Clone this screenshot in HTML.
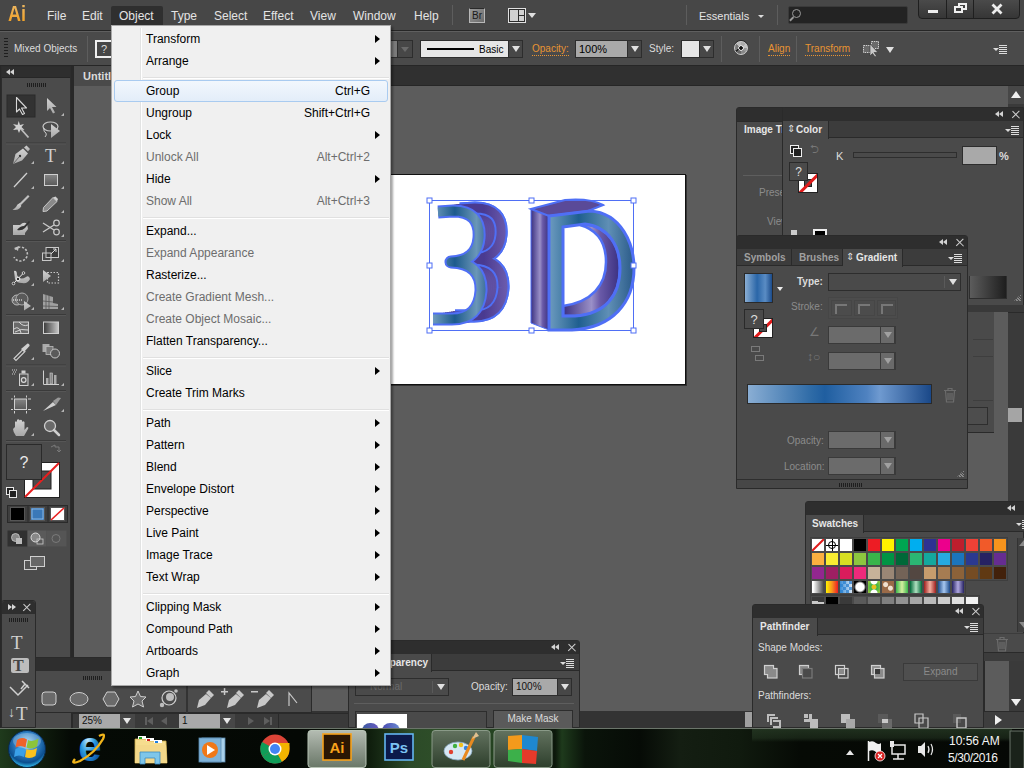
<!DOCTYPE html>
<html><head><meta charset="utf-8">
<style>
*{box-sizing:border-box;margin:0;padding:0}
html,body{width:1024px;height:768px;overflow:hidden;background:#282828;font-family:"Liberation Sans",sans-serif;position:relative}
.a{position:absolute}
.t{position:absolute;white-space:nowrap;line-height:1}
.mi{position:absolute;top:10px;font-size:12px;color:#e4e4e4;line-height:13px;white-space:nowrap}
.lt{position:absolute;font-size:10px;color:#dcdcdc;line-height:12px;white-space:nowrap}
.or{position:absolute;font-size:10px;color:#e89433;line-height:12px;white-space:nowrap;border-bottom:1px dotted #e89433}
.vsep{position:absolute;width:1px;background:#2e2e2e;border-right:1px solid #5d5d5d}
.dd{position:absolute;width:15px;background:#474747;border:1px solid #2d2d2d}
.dd:after{content:"";position:absolute;left:3px;top:50%;margin-top:-3px;border-left:4px solid transparent;border-right:4px solid transparent;border-top:6px solid #e0e0e0}
.ph{position:absolute;height:13px;background:#2e2e2e;border-top:1px solid #474747}
.tabrow{position:absolute;height:17px;background:#3c3c3c;border-bottom:1px solid #2a2a2a}
.tab{position:absolute;top:0;height:17px;font-size:11px;font-weight:bold;color:#9a9a9a;line-height:17px;padding-left:7px;white-space:nowrap;border-right:1px solid #2a2a2a}
.tab.on{background:#4a4a4a;color:#e6e6e6;height:18px}
.pb{position:absolute;background:#4a4a4a}
.pmenu{position:absolute;width:14px;height:9px}
.pmenu:before{content:"";position:absolute;left:0;top:3px;border-left:3px solid transparent;border-right:3px solid transparent;border-top:3px solid #dcdcdc}
.pmenu:after{content:"";position:absolute;left:6px;top:0;width:8px;height:9px;background:repeating-linear-gradient(#dcdcdc 0 1px,transparent 1px 2px)}
.dclose{position:absolute;font-size:11px;color:#dcdcdc;line-height:11px;font-weight:bold}

#menu .sepv{position:absolute;left:28px;top:2px;width:2px;height:656px;background:#e2e3e3;border-right:1px solid #fff}
#menu .it{position:absolute;left:34px;font-size:12px;color:#000;line-height:14px;white-space:nowrap}
#menu .sc{position:absolute;right:20px;font-size:12px;color:#000;line-height:14px;white-space:nowrap}
#menu .dis{color:#6d6d6d}
#menu .ar{position:absolute;left:263px;width:0;height:0;border-top:4px solid transparent;border-bottom:4px solid transparent;border-left:5px solid #000}
#menu .hs{position:absolute;left:31px;width:246px;height:2px;background:#e0e0e0;border-bottom:1px solid #fff}
#menu .hl{position:absolute;left:2px;top:54px;width:274px;height:22px;border:1px solid #a9cbf0;border-radius:3px;background:linear-gradient(#f2f7fd,#e3edf9)}

.dbl{position:absolute;width:8px;height:7px}
.dbl:before,.dbl:after{content:"";position:absolute;top:0;border-top:3.5px solid transparent;border-bottom:3.5px solid transparent;border-right:4px solid #d4d4d4}
.dbl:before{left:0}.dbl:after{left:4px}
.xx{position:absolute;width:8px;height:8px}
.xx:before,.xx:after{content:"";position:absolute;left:-1px;top:3.2px;width:9.5px;height:1.4px;background:#d0d0d0;transform:rotate(45deg)}
.xx:after{transform:rotate(-45deg)}

.ddg{background:#6a6a6a;border-color:#3a3a3a}
.ddg:after{border-top-color:#a0a0a0}
</style></head><body>

<!-- MENUBAR -->
<div class="a" style="left:0;top:0;width:1024px;height:31px;background:#474747;border-bottom:1px solid #262626">
  <div class="t" style="left:8px;top:3px;font-size:22px;font-weight:bold;color:#e8a33a;letter-spacing:0px;transform:scaleX(.82);transform-origin:0 0;background:linear-gradient(#ebb867,#f19d1c);-webkit-background-clip:text;-webkit-text-fill-color:transparent">Ai</div>
  <div class="mi" style="left:47px">File</div>
  <div class="mi" style="left:82px">Edit</div>
  <div class="a" style="left:111px;top:6px;width:52px;height:20px;background:#2f2f2f;border-radius:2px 2px 0 0"></div>
  <div class="mi" style="left:119px">Object</div>
  <div class="mi" style="left:171px">Type</div>
  <div class="mi" style="left:214px">Select</div>
  <div class="mi" style="left:263px">Effect</div>
  <div class="mi" style="left:310px">View</div>
  <div class="mi" style="left:353px">Window</div>
  <div class="mi" style="left:414px">Help</div>
  <div class="vsep" style="left:452px;top:5px;height:20px"></div>
  <div class="a" style="left:469px;top:8px;width:16px;height:15px;background:linear-gradient(135deg,#9a9a9a,#6a6a6a);border:1px solid #b8b8b8;border-top-color:#2a2a2a;font-size:10px;color:#1a1a1a;line-height:13px;text-align:center">Br</div>
  <div class="a" style="left:508px;top:8px;width:18px;height:15px;border:1px solid #e0e0e0;background:#2b2b2b">
    <div class="a" style="left:1px;top:1px;width:8px;height:11px;background:#d0d0d0"></div>
    <div class="a" style="left:10px;top:1px;width:5px;height:5px;background:#d0d0d0"></div>
    <div class="a" style="left:10px;top:7px;width:5px;height:5px;background:#d0d0d0"></div>
  </div>
  <div class="a" style="left:528px;top:13px;border-left:4px solid transparent;border-right:4px solid transparent;border-top:5px solid #e0e0e0"></div>
  <div class="vsep" style="left:686px;top:5px;height:20px"></div>
  <div class="mi" style="left:699px;top:10px;font-size:11px">Essentials</div>
  <div class="a" style="left:758px;top:15px;border-left:3px solid transparent;border-right:3px solid transparent;border-top:3px solid #dcdcdc"></div>
  <div class="vsep" style="left:777px;top:5px;height:20px"></div>
  <div class="a" style="left:788px;top:6px;width:120px;height:18px;background:#232323;border-radius:2px;border:1px solid #3a3a3a"></div>
  <div class="a" style="left:792px;top:9px;width:9px;height:9px;border:1.5px solid #9a9a9a;border-radius:50%"></div>
  <div class="a" style="left:789px;top:18px;width:5px;height:1.5px;background:#9a9a9a;transform:rotate(-45deg)"></div>
  <div class="a" style="left:918px;top:-1px;width:102px;height:20px;background:linear-gradient(#4a4a4a,#363636);border:1px solid #1f1f1f;border-radius:0 0 4px 4px"></div>
  <div class="a" style="left:946px;top:0;width:1px;height:18px;background:#1f1f1f"></div>
  <div class="a" style="left:973px;top:0;width:1px;height:18px;background:#1f1f1f"></div>
  <div class="a" style="left:928px;top:10px;width:10px;height:3px;background:#ececec"></div>
  <div class="a" style="left:958px;top:3px;width:9px;height:7px;border:2px solid #f0f0f0;border-top-width:2px"></div>
  <div class="a" style="left:954px;top:6px;width:9px;height:7px;border:2px solid #f0f0f0;background:#3c3c3c"></div>
  <svg class="a" style="left:990px;top:3px" width="14" height="12" viewBox="0 0 14 12"><path d="M2.5 1.5 L11.5 10.5 M11.5 1.5 L2.5 10.5" stroke="#ececec" stroke-width="2.8"/></svg>
</div>

<!-- CONTROL BAR -->
<div class="a" style="left:0;top:31px;width:1024px;height:35px;background:#4a4a4a;border-top:1px solid #5f5f5f;border-bottom:1px solid #262626">
  <div class="a" style="left:4px;top:6px;width:4px;height:21px;background:repeating-linear-gradient(#1e1e1e 0 1px,transparent 1px 3px)"></div>
  <div class="lt" style="left:14px;top:11px">Mixed Objects</div>
  <div class="vsep" style="left:87px;top:4px;height:26px"></div>
  <div class="a" style="left:95px;top:8px;width:18px;height:18px;border:2px solid #f0f0f0;background:#474747;font-size:11px;color:#ddd;text-align:center;line-height:14px">?</div>
  <div class="a" style="left:380px;top:8px;width:18px;height:18px;background:#7a7a7a;border:1px solid #2d2d2d"></div>
  <div class="a" style="left:397px;top:8px;width:16px;height:18px;background:#474747;border:1px solid #2d2d2d"></div>
  <div class="a" style="left:401px;top:15px;border-left:4px solid transparent;border-right:4px solid transparent;border-top:5px solid #6a6a6a"></div>
  <div class="a" style="left:420px;top:8px;width:89px;height:18px;background:#e6e6e6;border:1px solid #2d2d2d">
    <div class="a" style="left:6px;top:7px;width:47px;height:2px;background:#000"></div>
    <div class="t" style="left:58px;top:4px;font-size:10px;color:#000">Basic</div>
  </div>
  <div class="dd" style="left:508px;top:8px;height:18px"></div>
  <div class="or" style="left:532px;top:11px">Opacity:</div>
  <div class="a" style="left:575px;top:8px;width:53px;height:18px;background:#a9a9a9;border:1px solid #2d2d2d">
    <div class="t" style="left:3px;top:3px;font-size:11px;color:#000">100%</div>
  </div>
  <div class="dd" style="left:627px;top:8px;height:18px"></div>
  <div class="lt" style="left:649px;top:11px">Style:</div>
  <div class="a" style="left:681px;top:8px;width:19px;height:18px;background:#e6e6e6;border:1px solid #2d2d2d"></div>
  <div class="dd" style="left:699px;top:8px;height:18px"></div>
  <div class="vsep" style="left:721px;top:4px;height:26px"></div>
  <div class="a" style="left:734px;top:9px;width:14px;height:14px;border-radius:50%;border:1px solid #d0d0d0;box-shadow:0 -1px 0 #2a2a2a;background:radial-gradient(circle,#111 0 1.5px,#ddd 2px 2.5px,transparent 3px),conic-gradient(#aaa 0 45deg,#c4c4c4 45deg 90deg,#999 90deg 135deg,#888 135deg 180deg,#666 180deg 225deg,#222 225deg 250deg,#777 250deg 315deg,#bbb 315deg)"></div>
  <div class="vsep" style="left:759px;top:4px;height:26px"></div>
  <div class="or" style="left:768px;top:11px">Align</div>
  <div class="vsep" style="left:796px;top:4px;height:26px"></div>
  <div class="or" style="left:805px;top:11px">Transform</div>
  <svg class="a" style="left:862px;top:8px" width="20" height="18" viewBox="0 0 20 18"><rect x="1.5" y="5.5" width="7" height="7" fill="#6a6a6a" stroke="#d0d0d0" stroke-dasharray="1.5 .8"/><rect x="9.5" y="1.5" width="7" height="7" fill="#6a6a6a" stroke="#d0d0d0" stroke-dasharray="1.5 .8"/><path d="M8 4 L8 16 L10.5 13.5 L13 17 L14.5 16 L12 12.5 L16 12.5Z" fill="#c8c8c8" stroke="#333" stroke-width=".6"/></svg>
  <div class="a" style="left:886px;top:15px;border-left:4px solid transparent;border-right:4px solid transparent;border-top:6px solid #e0e0e0"></div>
  <div class="pmenu" style="left:993px;top:13px"></div>
</div>

<!-- DOCUMENT TAB ROW + CANVAS -->
<div class="a" style="left:74px;top:66px;width:950px;height:20px;background:#303030;border-bottom:1px solid #262626"></div>
<div class="a" style="left:74px;top:66px;width:80px;height:20px;background:#4a4a4a;border-right:1px solid #262626">
  <div class="t" style="left:9px;top:5px;font-size:11px;font-weight:bold;color:#dadada">Untitled-1</div>
</div>
<div class="a" style="left:74px;top:86px;width:934px;height:625px;background:#5c5c5c"></div>
<!-- vertical scrollbar -->
<div class="a" style="left:1008px;top:86px;width:16px;height:625px;background:#3a3a3a"></div>
<div class="a" style="left:1008px;top:86px;width:16px;height:18px;background:#474747"></div>
<div class="a" style="left:1011px;top:91px;border-left:5px solid transparent;border-right:5px solid transparent;border-bottom:7px solid #f0f0f0"></div>
<div class="a" style="left:1008px;top:408px;width:14px;height:14px;background:#a5a5a5"></div>
<!-- horizontal scrollbar/status -->
<div class="a" style="left:74px;top:711px;width:950px;height:17px;background:#333"></div>
<div class="a" style="left:745px;top:712px;width:7px;height:15px;background:#a0a0a0"></div>

<!-- ARTBOARD -->
<div class="a" style="left:300px;top:174px;width:386px;height:211px;background:#fff;border:1px solid #111;box-shadow:1px 1px 0 #333"></div>


<!-- 3D ART -->
<svg class="a" style="left:380px;top:170px" width="300" height="170" viewBox="380 170 300 170">
  <defs>
    <linearGradient id="fr" x1="0" y1="0" x2="1" y2="0"><stop offset="0" stop-color="#6d9bbf"/><stop offset=".35" stop-color="#1f5f8f"/><stop offset=".7" stop-color="#5f8fb5"/><stop offset="1" stop-color="#2a5a88"/></linearGradient>
    <linearGradient id="pu" x1="0" y1="0" x2="1" y2="0"><stop offset="0" stop-color="#3a3080"/><stop offset=".5" stop-color="#9a90c8"/><stop offset=".65" stop-color="#6a5aa8"/><stop offset="1" stop-color="#3a3080"/></linearGradient>
    <linearGradient id="fr3" x1="0" y1="0" x2="1" y2="0"><stop offset="0" stop-color="#7aa4c4"/><stop offset=".4" stop-color="#1d5b8c"/><stop offset=".75" stop-color="#6a96b8"/><stop offset="1" stop-color="#24578a"/></linearGradient>
  </defs>
  <!-- 3 back -->
  <linearGradient id="pu3" gradientUnits="userSpaceOnUse" x1="462" y1="0" x2="514" y2="0"><stop offset="0" stop-color="#4a3a90"/><stop offset=".5" stop-color="#7060b0"/><stop offset=".68" stop-color="#b0a8d8"/><stop offset=".8" stop-color="#6a5aa8"/><stop offset="1" stop-color="#3a3080"/></linearGradient>
  <linearGradient id="tl3" gradientUnits="userSpaceOnUse" x1="430" y1="0" x2="492" y2="0"><stop offset="0" stop-color="#7aa4c4"/><stop offset=".4" stop-color="#1d5b8c"/><stop offset=".75" stop-color="#6a96b8"/><stop offset="1" stop-color="#24578a"/></linearGradient>
  
  <path d="M438,212 L453,211 Q481,211 479,238 Q477,261 451,262 Q482,263 481,291 Q479,319 452,319 L433,319" fill="none" stroke-linejoin="round" transform="translate(22 -3)" stroke="#4f6ff5" stroke-width="13"/>
  <path d="M438,212 L453,211 Q481,211 479,238 Q477,261 451,262 Q482,263 481,291 Q479,319 452,319 L433,319" fill="none" stroke-linejoin="round" transform="translate(2 -0.27)" stroke="url(#pu3)" stroke-width="10"/>
  <path d="M438,212 L453,211 Q481,211 479,238 Q477,261 451,262 Q482,263 481,291 Q479,319 452,319 L433,319" fill="none" stroke-linejoin="round" transform="translate(4 -0.55)" stroke="url(#pu3)" stroke-width="10"/>
  <path d="M438,212 L453,211 Q481,211 479,238 Q477,261 451,262 Q482,263 481,291 Q479,319 452,319 L433,319" fill="none" stroke-linejoin="round" transform="translate(6 -0.82)" stroke="url(#pu3)" stroke-width="10"/>
  <path d="M438,212 L453,211 Q481,211 479,238 Q477,261 451,262 Q482,263 481,291 Q479,319 452,319 L433,319" fill="none" stroke-linejoin="round" transform="translate(8 -1.09)" stroke="url(#pu3)" stroke-width="10"/>
  <path d="M438,212 L453,211 Q481,211 479,238 Q477,261 451,262 Q482,263 481,291 Q479,319 452,319 L433,319" fill="none" stroke-linejoin="round" transform="translate(10 -1.36)" stroke="url(#pu3)" stroke-width="10"/>
  <path d="M438,212 L453,211 Q481,211 479,238 Q477,261 451,262 Q482,263 481,291 Q479,319 452,319 L433,319" fill="none" stroke-linejoin="round" transform="translate(12 -1.64)" stroke="url(#pu3)" stroke-width="10"/>
  <path d="M438,212 L453,211 Q481,211 479,238 Q477,261 451,262 Q482,263 481,291 Q479,319 452,319 L433,319" fill="none" stroke-linejoin="round" transform="translate(14 -1.91)" stroke="url(#pu3)" stroke-width="10"/>
  <path d="M438,212 L453,211 Q481,211 479,238 Q477,261 451,262 Q482,263 481,291 Q479,319 452,319 L433,319" fill="none" stroke-linejoin="round" transform="translate(16 -2.18)" stroke="url(#pu3)" stroke-width="10"/>
  <path d="M438,212 L453,211 Q481,211 479,238 Q477,261 451,262 Q482,263 481,291 Q479,319 452,319 L433,319" fill="none" stroke-linejoin="round" transform="translate(18 -2.45)" stroke="url(#pu3)" stroke-width="10"/>
  <path d="M438,212 L453,211 Q481,211 479,238 Q477,261 451,262 Q482,263 481,291 Q479,319 452,319 L433,319" fill="none" stroke-linejoin="round" transform="translate(20 -2.73)" stroke="url(#pu3)" stroke-width="10"/>
  <path d="M438,212 L453,211 Q481,211 479,238 Q477,261 451,262 Q482,263 481,291 Q479,319 452,319 L433,319" fill="none" stroke-linejoin="round" transform="translate(22 -3)" stroke="#4f6ff5" stroke-width="13"/>
  <path d="M438,212 L453,211 Q481,211 479,238 Q477,261 451,262 Q482,263 481,291 Q479,319 452,319 L433,319" fill="none" stroke-linejoin="round" transform="translate(22 -3)" stroke="url(#pu3)" stroke-width="9"/>
  <!-- 3 front -->
  <path d="M438,212 L453,211 Q481,211 479,238 Q477,261 451,262 Q482,263 481,291 Q479,319 452,319 L433,319" fill="none" stroke-linejoin="round" stroke="#4f6ff5" stroke-width="13"/>
  <path d="M438,212 L453,211 Q481,211 479,238 Q477,261 451,262 Q482,263 481,291 Q479,319 452,319 L433,319" fill="none" stroke-linejoin="round" stroke="url(#tl3)" stroke-width="9"/>
  <!-- D extrusion -->
  <path d="M531,209 L549,216 L549,330 L531,323 Z" fill="url(#pu)" stroke="#4f6ff5" stroke-width="1"/>
  <path d="M531,209 L565,200 Q590,198 603,205 L588,211 L549,216 Z" fill="#5a4a98" stroke="#4f6ff5" stroke-width="2"/>
  <!-- D front -->
  <path d="M585,224 C610,227 620,248 620,268 C620,296 605,314 575,316 L563,316 L563,306 C592,302 606,285 606,262 C606,242 598,230 580,225 Z" fill="url(#pu)" stroke="#4f6ff5" stroke-width="2.5"/>
  <path fill-rule="evenodd" d="M549,216 L590,211 C622,213 634,245 634,268 C634,303 612,328 572,330 L549,330 Z M563,227 L585,224 C610,227 620,248 620,268 C620,296 605,314 575,316 L563,316 Z" fill="url(#fr)" stroke="#4f6ff5" stroke-width="3"/>
  <!-- selection box -->
  <rect x="429.5" y="200.5" width="204" height="130" fill="none" stroke="#4f6ff5" stroke-width="1"/>
  <g fill="#fff" stroke="#4f6ff5" stroke-width="1">
    <rect x="427" y="198" width="5" height="5"/><rect x="529" y="198" width="5" height="5"/><rect x="631" y="198" width="5" height="5"/>
    <rect x="427" y="263" width="5" height="5"/><rect x="631" y="263" width="5" height="5"/>
    <rect x="427" y="328" width="5" height="5"/><rect x="529" y="328" width="5" height="5"/><rect x="631" y="328" width="5" height="5"/>
  </g>
</svg>
<!-- TOOLBAR -->
<div class="a" style="left:1px;top:66px;width:70px;height:592px;background:#4b4b4b;border:1px solid #2c2c2c">
  <div class="a" style="left:0;top:0;width:68px;height:11px;background:#2e2e2e;border-bottom:1px solid #262626"></div>
  <div class="dbl" style="left:4px;top:2px"></div>
  <div class="a" style="left:25px;top:16px;width:20px;height:4px;background:repeating-linear-gradient(90deg,#1e1e1e 0 1px,transparent 1px 2px)"></div>
</div>


<!-- IMAGE TRACE PANEL (behind) -->
<div class="a" style="left:736px;top:107px;width:60px;height:201px;background:#4a4a4a;border:1px solid #2a2a2a;border-radius:3px 3px 0 0">
  <div class="a" style="left:0;top:0;width:58px;height:13px;background:#2e2e2e"></div>
  <div class="a" style="left:0;top:13px;width:58px;height:17px;background:#4a4a4a;border-top:1px solid #2a2a2a"></div>
  <div class="t" style="left:7px;top:17px;font-size:10px;font-weight:bold;color:#e6e6e6">Image Trace</div>
  <div class="a" style="left:6px;top:67px;width:46px;height:1px;background:#3c3c3c;border-bottom:1px solid #5e5e5e"></div>
  <div class="t" style="left:22px;top:80px;font-size:10px;color:#8c8c8c">Preset:</div>
  <div class="t" style="left:30px;top:109px;font-size:10px;color:#8c8c8c">View:</div>
</div>

<!-- COLOR PANEL -->
<div class="a" style="left:782px;top:107px;width:242px;height:199px;background:#4a4a4a;border:1px solid #2a2a2a;border-radius:3px 0 0 0">
  <div class="ph" style="left:0;top:0;width:240px;border-top:none"></div>
  <div class="dbl" style="left:212px;top:3px"></div>
  <div class="xx" style="left:229px;top:3px"></div>
  <div class="tabrow" style="left:0;top:13px;width:240px"></div>
  <div class="a" style="left:0;top:13px;width:46px;height:18px;background:#4a4a4a;border-right:1px solid #2a2a2a"></div>
  <div class="t" style="left:4px;top:16px;font-size:10px;color:#dcdcdc">⇕</div>
  <div class="t" style="left:13px;top:17px;font-size:10px;font-weight:bold;color:#e6e6e6">Color</div>
  <div class="pmenu" style="left:222px;top:18px"></div>
  <!-- body -->
  <div class="a" style="left:7px;top:37px;width:9px;height:9px;border:1px solid #eee;background:#222"></div>
  <div class="a" style="left:10px;top:40px;width:9px;height:9px;border:1px solid #eee;background:#222"></div>
  <div class="t" style="left:27px;top:36px;font-size:11px;color:#777">⮌</div>
  <div class="a" style="left:15px;top:65px;width:20px;height:20px;background:#fff;border:1px solid #222;overflow:hidden">
    <div class="a" style="left:5px;top:5px;width:8px;height:8px;background:#4a4a4a;border:1px solid #222"></div>
    <div class="a" style="left:-4px;top:8px;width:28px;height:2.5px;background:#e01b1b;transform:rotate(-45deg)"></div>
  </div>
  <div class="a" style="left:6px;top:54px;width:19px;height:19px;background:#4a4a4a;border:1px solid #2a2a2a;font-size:12px;color:#ddd;text-align:center;line-height:18px">?</div>
  <div class="t" style="left:53px;top:43px;font-size:11px;color:#dcdcdc">K</div>
  <div class="a" style="left:70px;top:44px;width:104px;height:6px;background:#4a4a4a;border:1px solid #2e2e2e"></div>
  <div class="a" style="left:179px;top:38px;width:35px;height:19px;background:#a9a9a9;border:1px solid #2d2d2d"></div>
  <div class="t" style="left:216px;top:43px;font-size:11px;font-weight:bold;color:#dcdcdc">%</div>
  <div class="a" style="left:186px;top:168px;width:38px;height:23px;background:linear-gradient(90deg,#5c5c5c,#1e1e1e);border:1px solid #2e2e2e;border-top:none"></div>
  <div class="a" style="left:231px;top:186px;width:7px;height:7px;background:repeating-linear-gradient(45deg,#888 0 1px,transparent 1px 2px);clip-path:polygon(100% 0,100% 100%,0 100%)"></div>
  <div class="a" style="left:8px;top:122px;width:6px;height:5px;background:#ccc"></div>
  <div class="a" style="left:30px;top:121px;width:14px;height:10px;background:#000;border:2px solid #eee"></div>
</div>

<!-- panel behind gradient on right -->
<div class="a" style="left:900px;top:305px;width:124px;height:8px;background:#393939;border-bottom:1px solid #2a2a2a"></div>
<div class="a" style="left:900px;top:305px;width:95px;height:128px;background:#4a4a4a;border:1px solid #2a2a2a;border-top:none">
  <div class="a" style="left:0;top:0;width:95px;height:7px;background:#393939"></div>
  <div class="a" style="left:72px;top:34px;width:20px;height:1px;background:#3e3e3e"></div>
  <div class="a" style="left:72px;top:51px;width:20px;height:1px;background:#3e3e3e"></div>
  <div class="a" style="left:72px;top:95px;width:20px;height:1px;background:#3e3e3e"></div>
  <div class="a" style="left:60px;top:102px;width:27px;height:18px;border:1px solid #2e2e2e;background:#4d4d4d"></div>
</div>
<div class="a" style="left:994px;top:312px;width:14px;height:188px;background:#5c5c5c"></div>

<!-- GRADIENT PANEL -->
<div class="a" style="left:736px;top:235px;width:232px;height:254px;background:#4a4a4a;border:1px solid #2a2a2a;border-radius:3px 3px 0 0">
  <div class="ph" style="left:0;top:0;width:230px;border-top:none"></div>
  <div class="dbl" style="left:202px;top:3px"></div>
  <div class="xx" style="left:219px;top:3px"></div>
  <div class="tabrow" style="left:0;top:13px;width:230px"></div>
  <div class="a" style="left:0;top:13px;width:55px;height:17px;border-right:1px solid #2a2a2a"></div>
  <div class="t" style="left:7px;top:17px;font-size:10px;font-weight:bold;color:#a0a0a0">Symbols</div>
  <div class="a" style="left:55px;top:13px;width:51px;height:17px;border-right:1px solid #2a2a2a"></div>
  <div class="t" style="left:62px;top:17px;font-size:10px;font-weight:bold;color:#a0a0a0">Brushes</div>
  <div class="a" style="left:106px;top:13px;width:60px;height:18px;background:#4a4a4a;border-right:1px solid #2a2a2a"></div>
  <div class="t" style="left:109px;top:16px;font-size:10px;color:#dcdcdc">⇕</div>
  <div class="t" style="left:119px;top:17px;font-size:10px;font-weight:bold;color:#e6e6e6">Gradient</div>
  <div class="pmenu" style="left:211px;top:18px"></div>
  <!-- body -->
  <div class="a" style="left:7px;top:37px;width:29px;height:30px;border:1px solid #2a2a2a;background:linear-gradient(90deg,#8aaed4,#2a66a8 45%,#5a8cc4 75%,#1b4b8a)"></div>
  <div class="a" style="left:40px;top:51px;border-left:3px solid transparent;border-right:3px solid transparent;border-top:4px solid #eee"></div>
  <div class="t" style="left:60px;top:41px;font-size:10px;font-weight:bold;color:#dcdcdc">Type:</div>
  <div class="a" style="left:91px;top:37px;width:133px;height:18px;background:#4a4a4a;border:1px solid #2d2d2d">
    <div class="a" style="left:115px;top:2px;width:1px;height:12px;background:#333;border-right:1px solid #5a5a5a"></div>
    <div class="a" style="left:120px;top:5px;border-left:4px solid transparent;border-right:4px solid transparent;border-top:6px solid #e0e0e0"></div>
  </div>
  <div class="t" style="left:54px;top:66px;font-size:10px;color:#8c8c8c">Stroke:</div>
  <div class="a" style="left:91px;top:61px;width:70px;height:22px;border:1px solid #464646;background:#4c4c4c"></div>
  <div class="a" style="left:94px;top:64px;width:21px;height:16px;border:1px solid #464646"></div>
  <div class="a" style="left:117px;top:64px;width:21px;height:16px;border:1px solid #464646"></div>
  <div class="a" style="left:140px;top:64px;width:19px;height:16px;border:1px solid #464646"></div>
  <div class="a" style="left:98px;top:68px;width:12px;height:10px;border-left:2px solid #777;border-top:2px solid #777"></div>
  <div class="a" style="left:121px;top:68px;width:12px;height:10px;border-left:2px solid #777;border-top:2px solid #777"></div>
  <div class="a" style="left:144px;top:68px;width:12px;height:10px;border-left:2px solid #777;border-top:2px solid #777"></div>
  <div class="t" style="left:72px;top:90px;font-size:12px;color:#777">∠</div>
  <div class="a" style="left:91px;top:90px;width:68px;height:18px;background:#6b6b6b;border:1px solid #3a3a3a"></div>
  <div class="dd ddg" style="left:143px;top:90px;height:18px"></div>
  <div class="t" style="left:70px;top:115px;font-size:12px;color:#777">↕○</div>
  <div class="a" style="left:91px;top:116px;width:68px;height:18px;background:#6b6b6b;border:1px solid #3a3a3a"></div>
  <div class="dd ddg" style="left:143px;top:116px;height:18px"></div>
  <div class="a" style="left:16px;top:82px;width:20px;height:20px;background:#fff;border:1px solid #222;overflow:hidden"><div class="a" style="left:-4px;top:8px;width:28px;height:2.5px;background:#e01b1b;transform:rotate(-45deg)"></div><div class="a" style="left:5px;top:5px;width:8px;height:8px;background:#4a4a4a;border:1px solid #222"></div></div>
  <div class="a" style="left:7px;top:73px;width:20px;height:20px;background:#4a4a4a;border:1px solid #2a2a2a;font-size:13px;color:#ddd;text-align:center;line-height:19px">?</div>
  <div class="a" style="left:14px;top:110px;width:14px;height:16px;opacity:.5">
    <div class="a" style="left:0;top:0;width:9px;height:6px;border:1px solid #aaa"></div>
    <div class="a" style="left:4px;top:9px;width:9px;height:6px;border:1px solid #aaa"></div>
  </div>
  <div class="a" style="left:10px;top:148px;width:185px;height:20px;border:1px solid #2a2a2a;background:linear-gradient(90deg,#8aaed4 0%,#2d6aa6 35%,#1f5ea0 42%,#4f82c0 65%,#6f9ad0 72%,#1a4888 100%)"></div>
  <svg class="a" style="left:206px;top:151px" width="14" height="16" viewBox="0 0 14 16"><path d="M1 3.5 H13 M5 3.5 V1.5 H9 V3.5 M2.5 4 L3.5 15 H10.5 L11.5 4 M5 6 V13 M7 6 V13 M9 6 V13" fill="none" stroke="#6c6c6c" stroke-width="1.2"/></svg>
  <div class="t" style="left:50px;top:200px;font-size:10px;color:#8c8c8c">Opacity:</div>
  <div class="a" style="left:91px;top:195px;width:68px;height:18px;background:#6b6b6b;border:1px solid #3a3a3a"></div>
  <div class="dd ddg" style="left:143px;top:195px;height:18px"></div>
  <div class="t" style="left:47px;top:226px;font-size:10px;color:#8c8c8c">Location:</div>
  <div class="a" style="left:91px;top:221px;width:68px;height:18px;background:#6b6b6b;border:1px solid #3a3a3a"></div>
  <div class="dd ddg" style="left:143px;top:221px;height:18px"></div>
  <div class="a" style="left:220px;top:234px;width:7px;height:7px;background:repeating-linear-gradient(45deg,#888 0 1px,transparent 1px 2px);clip-path:polygon(100% 0,100% 100%,0 100%)"></div>
  <div class="a" style="left:0;top:243px;width:230px;height:9px;background:#474747;border-top:1px solid #2e2e2e"></div>
  <div class="a" style="left:102px;top:247px;width:24px;height:4px;background:repeating-linear-gradient(90deg,#1e1e1e 0 1px,transparent 1px 2px)"></div>
</div>

<!-- SWATCHES PANEL -->
<div class="a" style="left:805px;top:501px;width:219px;height:227px;background:#4a4a4a;border:1px solid #2a2a2a;border-radius:3px 0 0 0">
  <div class="ph" style="left:0;top:0;width:219px;border-top:none"></div>
  <div class="dbl" style="left:201px;top:3px"></div>
  <div class="tabrow" style="left:0;top:13px;width:219px"></div>
  <div class="a" style="left:0;top:13px;width:58px;height:18px;background:#4a4a4a;border-right:1px solid #2a2a2a"></div>
  <div class="t" style="left:6px;top:17px;font-size:10px;font-weight:bold;color:#e6e6e6">Swatches</div>
  <div class="pmenu" style="left:210px;top:18px"></div>
  <div class="a" style="left:4px;top:35px;width:198px;height:44px;background:#3e3e3e"></div><div class="a" style="left:4px;top:79px;width:156px;height:16px;background:#3e3e3e"></div><div class="a" style="left:4px;top:93px;width:170px;height:16px;background:#3e3e3e"></div>
  <div class="a" style="left:5px;top:36px;width:14px;height:14px;background:#fff;border:1px solid #4a4a4a;overflow:hidden"><div class="a" style="left:-3px;top:5px;width:18px;height:2px;background:#e01b1b;transform:rotate(-45deg)"></div></div>
  <div class="a" style="left:19px;top:36px;width:14px;height:14px;background:#fff;border:1px solid #4a4a4a"><div class="a" style="left:2px;top:2px;width:8px;height:8px;border:1px solid #000;border-radius:50%"></div><div class="a" style="left:6px;top:0;width:1px;height:12px;background:#000"></div><div class="a" style="left:0;top:6px;width:12px;height:1px;background:#000"></div></div>
  <div class="a" style="left:33px;top:36px;width:14px;height:14px;background:#ffffff;border:1px solid #4a4a4a"></div>
  <div class="a" style="left:47px;top:36px;width:14px;height:14px;background:#000000;border:1px solid #4a4a4a"></div>
  <div class="a" style="left:61px;top:36px;width:14px;height:14px;background:#ed1c24;border:1px solid #4a4a4a"></div>
  <div class="a" style="left:75px;top:36px;width:14px;height:14px;background:#fff200;border:1px solid #4a4a4a"></div>
  <div class="a" style="left:89px;top:36px;width:14px;height:14px;background:#00a651;border:1px solid #4a4a4a"></div>
  <div class="a" style="left:103px;top:36px;width:14px;height:14px;background:#00aeef;border:1px solid #4a4a4a"></div>
  <div class="a" style="left:117px;top:36px;width:14px;height:14px;background:#2e3192;border:1px solid #4a4a4a"></div>
  <div class="a" style="left:131px;top:36px;width:14px;height:14px;background:#ec008c;border:1px solid #4a4a4a"></div>
  <div class="a" style="left:145px;top:36px;width:14px;height:14px;background:#be1e2d;border:1px solid #4a4a4a"></div>
  <div class="a" style="left:159px;top:36px;width:14px;height:14px;background:#ef4136;border:1px solid #4a4a4a"></div>
  <div class="a" style="left:173px;top:36px;width:14px;height:14px;background:#f15a29;border:1px solid #4a4a4a"></div>
  <div class="a" style="left:187px;top:36px;width:14px;height:14px;background:#f7941d;border:1px solid #4a4a4a"></div>
  <div class="a" style="left:5px;top:50px;width:14px;height:14px;background:#fbb040;border:1px solid #4a4a4a"></div>
  <div class="a" style="left:19px;top:50px;width:14px;height:14px;background:#f9ed32;border:1px solid #4a4a4a"></div>
  <div class="a" style="left:33px;top:50px;width:14px;height:14px;background:#d7df23;border:1px solid #4a4a4a"></div>
  <div class="a" style="left:47px;top:50px;width:14px;height:14px;background:#8dc63f;border:1px solid #4a4a4a"></div>
  <div class="a" style="left:61px;top:50px;width:14px;height:14px;background:#39b54a;border:1px solid #4a4a4a"></div>
  <div class="a" style="left:75px;top:50px;width:14px;height:14px;background:#009444;border:1px solid #4a4a4a"></div>
  <div class="a" style="left:89px;top:50px;width:14px;height:14px;background:#006838;border:1px solid #4a4a4a"></div>
  <div class="a" style="left:103px;top:50px;width:14px;height:14px;background:#2bb673;border:1px solid #4a4a4a"></div>
  <div class="a" style="left:117px;top:50px;width:14px;height:14px;background:#14a89e;border:1px solid #4a4a4a"></div>
  <div class="a" style="left:131px;top:50px;width:14px;height:14px;background:#27aae1;border:1px solid #4a4a4a"></div>
  <div class="a" style="left:145px;top:50px;width:14px;height:14px;background:#1c75bc;border:1px solid #4a4a4a"></div>
  <div class="a" style="left:159px;top:50px;width:14px;height:14px;background:#2b3990;border:1px solid #4a4a4a"></div>
  <div class="a" style="left:173px;top:50px;width:14px;height:14px;background:#262262;border:1px solid #4a4a4a"></div>
  <div class="a" style="left:187px;top:50px;width:14px;height:14px;background:#662d91;border:1px solid #4a4a4a"></div>
  <div class="a" style="left:5px;top:64px;width:14px;height:14px;background:#92278f;border:1px solid #4a4a4a"></div>
  <div class="a" style="left:19px;top:64px;width:14px;height:14px;background:#9e1f63;border:1px solid #4a4a4a"></div>
  <div class="a" style="left:33px;top:64px;width:14px;height:14px;background:#da1c5c;border:1px solid #4a4a4a"></div>
  <div class="a" style="left:47px;top:64px;width:14px;height:14px;background:#ee2a7b;border:1px solid #4a4a4a"></div>
  <div class="a" style="left:61px;top:64px;width:14px;height:14px;background:#c7b299;border:1px solid #4a4a4a"></div>
  <div class="a" style="left:75px;top:64px;width:14px;height:14px;background:#998675;border:1px solid #4a4a4a"></div>
  <div class="a" style="left:89px;top:64px;width:14px;height:14px;background:#736357;border:1px solid #4a4a4a"></div>
  <div class="a" style="left:103px;top:64px;width:14px;height:14px;background:#534741;border:1px solid #4a4a4a"></div>
  <div class="a" style="left:117px;top:64px;width:14px;height:14px;background:#c69c6d;border:1px solid #4a4a4a"></div>
  <div class="a" style="left:131px;top:64px;width:14px;height:14px;background:#a67c52;border:1px solid #4a4a4a"></div>
  <div class="a" style="left:145px;top:64px;width:14px;height:14px;background:#8c6239;border:1px solid #4a4a4a"></div>
  <div class="a" style="left:159px;top:64px;width:14px;height:14px;background:#754c24;border:1px solid #4a4a4a"></div>
  <div class="a" style="left:173px;top:64px;width:14px;height:14px;background:#603913;border:1px solid #4a4a4a"></div>
  <div class="a" style="left:187px;top:64px;width:14px;height:14px;background:#42210b;border:1px solid #4a4a4a"></div>
  <div class="a" style="left:5px;top:78px;width:14px;height:14px;background:linear-gradient(90deg,#fff 10%,#444);border:1px solid #4a4a4a"></div>
  <div class="a" style="left:19px;top:78px;width:14px;height:14px;background:linear-gradient(90deg,#fff200,#f7941d,#ed1c24);border:1px solid #4a4a4a"></div>
  <div class="a" style="left:33px;top:78px;width:14px;height:14px;background:linear-gradient(90deg,rgba(40,130,210,.9),rgba(40,130,210,0)),repeating-conic-gradient(#5a9ad8 0 25%,#d8e8f8 0 50%) 0 0/6px 6px;border:1px solid #4a4a4a"></div>
  <div class="a" style="left:47px;top:78px;width:14px;height:14px;background:radial-gradient(circle,#fff 0 4px,#000 6px);border:1px solid #4a4a4a"></div>
  <div class="a" style="left:61px;top:78px;width:14px;height:14px;background:radial-gradient(circle at 50% 0,#fff 0 3px,transparent 4px),radial-gradient(circle at 50% 100%,#fff 0 3px,transparent 4px),radial-gradient(circle,#e8c020 0 2px,#39b54a 3px,#8dc63f 7px);border:1px solid #4a4a4a"></div>
  <div class="a" style="left:75px;top:78px;width:14px;height:14px;background:radial-gradient(circle at 30% 30%,#f0e0d0 0 2px,transparent 3px),radial-gradient(circle at 70% 60%,#f0e0d0 0 2px,transparent 3px),#9a6a48;border:1px solid #4a4a4a"></div>
  <div class="a" style="left:89px;top:78px;width:14px;height:14px;background:linear-gradient(90deg,#39b54a,#d7f0a0,#39b54a);border:1px solid #4a4a4a"></div>
  <div class="a" style="left:103px;top:78px;width:14px;height:14px;background:linear-gradient(90deg,#006838,#b0e0c0,#006838);border:1px solid #4a4a4a"></div>
  <div class="a" style="left:117px;top:78px;width:14px;height:14px;background:linear-gradient(90deg,#9e1f1f,#f4b0a0,#9e1f1f);border:1px solid #4a4a4a"></div>
  <div class="a" style="left:131px;top:78px;width:14px;height:14px;background:linear-gradient(90deg,#1c4a8a,#a8c8f0,#1c4a8a);border:1px solid #4a4a4a"></div>
  <div class="a" style="left:145px;top:78px;width:14px;height:14px;background:linear-gradient(90deg,#262262,#b0a8e0,#262262);border:1px solid #4a4a4a"></div>
  <div class="a" style="left:5px;top:94px;width:14px;height:14px;background:linear-gradient(#3a3a3a 0 4px,transparent 4px),linear-gradient(90deg,#c8c8c8 0 6px,#3a3a3a 6px) 0 2px/100% 3px no-repeat,#c8c8c8;border:1px solid #4a4a4a"></div>
  <div class="a" style="left:19px;top:94px;width:14px;height:14px;background:#000000;border:1px solid #4a4a4a"></div>
  <div class="a" style="left:33px;top:94px;width:14px;height:14px;background:#3a3a3a;border:1px solid #4a4a4a"></div>
  <div class="a" style="left:47px;top:94px;width:14px;height:14px;background:#5a5a5a;border:1px solid #4a4a4a"></div>
  <div class="a" style="left:61px;top:94px;width:14px;height:14px;background:#6e6e6e;border:1px solid #4a4a4a"></div>
  <div class="a" style="left:75px;top:94px;width:14px;height:14px;background:#808080;border:1px solid #4a4a4a"></div>
  <div class="a" style="left:89px;top:94px;width:14px;height:14px;background:#939393;border:1px solid #4a4a4a"></div>
  <div class="a" style="left:103px;top:94px;width:14px;height:14px;background:#a6a6a6;border:1px solid #4a4a4a"></div>
  <div class="a" style="left:117px;top:94px;width:14px;height:14px;background:#bababa;border:1px solid #4a4a4a"></div>
  <div class="a" style="left:131px;top:94px;width:14px;height:14px;background:#cdcdcd;border:1px solid #4a4a4a"></div>
  <div class="a" style="left:145px;top:94px;width:14px;height:14px;background:#e0e0e0;border:1px solid #4a4a4a"></div>
  <div class="a" style="left:159px;top:94px;width:14px;height:14px;background:#f2f2f2;border:1px solid #4a4a4a"></div>
  <div class="a" style="left:211px;top:36px;width:9px;height:94px;background:#404040;border-left:1px solid #333"></div><div class="a" style="left:213px;top:38px;border-left:5px solid transparent;border-right:5px solid transparent;border-bottom:6px solid #8a8a8a"></div><div class="a" style="left:213px;top:120px;border-left:5px solid transparent;border-right:5px solid transparent;border-top:6px solid #8a8a8a"></div>
  <div class="a" style="left:0;top:131px;width:219px;height:20px;background:#4a4a4a;border-top:1px solid #3c3c3c"></div>
  <svg class="a" style="left:189px;top:134px" width="14" height="16" viewBox="0 0 14 16"><path d="M1 3.5 H13 M5 3.5 V1.5 H9 V3.5 M2.5 4 L3.5 15 H10.5 L11.5 4 M5 6 V13 M7 6 V13 M9 6 V13" fill="none" stroke="#6c6c6c" stroke-width="1.2"/></svg>
  <div class="a" style="left:0;top:150px;width:219px;height:9px;background:#3c3c3c;border-top:1px solid #2a2a2a"></div>
  <div class="a" style="left:178px;top:159px;width:25px;height:51px;background:#5c5c5c;border-left:1px solid #2a2a2a"></div>
  <div class="a" style="left:203px;top:159px;width:16px;height:51px;background:#3a3a3a"></div>
  <div class="a" style="left:205px;top:197px;border-left:5px solid transparent;border-right:5px solid transparent;border-top:7px solid #f0f0f0"></div>
  <div class="a" style="left:178px;top:209px;width:41px;height:18px;background:#3e3e3e;border-top:1px solid #2a2a2a"></div>
  <div class="a" style="left:189px;top:213px;border-top:5px solid transparent;border-bottom:5px solid transparent;border-left:7px solid #f0f0f0"></div>
</div>

<!-- PATHFINDER PANEL -->
<div class="a" style="left:752px;top:604px;width:232px;height:124px;background:#4a4a4a;border:1px solid #2a2a2a;border-radius:3px 3px 0 0">
  <div class="ph" style="left:0;top:0;width:230px;border-top:none"></div>
  <div class="dbl" style="left:202px;top:3px"></div>
  <div class="xx" style="left:219px;top:3px"></div>
  <div class="tabrow" style="left:0;top:13px;width:230px"></div>
  <div class="a" style="left:0;top:13px;width:65px;height:18px;background:#4a4a4a;border-right:1px solid #2a2a2a"></div>
  <div class="t" style="left:7px;top:17px;font-size:10px;font-weight:bold;color:#e6e6e6">Pathfinder</div>
  <div class="pmenu" style="left:211px;top:18px"></div>
  <div class="t" style="left:5px;top:38px;font-size:10px;color:#dcdcdc">Shape Modes:</div>
  <svg class="a" style="left:-753px;top:-605px" width="985" height="735" viewBox="0 0 985 735">
   <g stroke-width="1.2">
    <rect x="764.5" y="665.5" width="9" height="9" fill="#8a8a8a" stroke="#d0d0d0"/><rect x="767.5" y="668.5" width="9.5" height="9.5" fill="#8a8a8a" stroke="#d0d0d0"/>
    <rect x="766" y="667" width="7" height="7" fill="#8a8a8a"/>
    <rect x="799.5" y="665.5" width="9" height="9" fill="#8a8a8a" stroke="#d0d0d0"/><rect x="802.5" y="668.5" width="9.5" height="9.5" fill="#4a4a4a" stroke="#7a7a7a"/>
    <rect x="835.5" y="665.5" width="9" height="9" fill="none" stroke="#d0d0d0"/><rect x="838.5" y="668.5" width="9.5" height="9.5" fill="none" stroke="#d0d0d0"/>
    <rect x="839" y="669" width="5" height="5" fill="#8a8a8a"/>
    <rect x="871.5" y="665.5" width="9" height="9" fill="#8a8a8a" stroke="#d0d0d0"/><rect x="874.5" y="668.5" width="9.5" height="9.5" fill="#8a8a8a" stroke="#d0d0d0"/>
    <rect x="875" y="669" width="5" height="5" fill="#3a3a3a"/>
   </g>
   <g fill="#bdbdbd">
    <path d="M767 714 h8 v2 h-6 v6 h-2z M770 717 h8 v2 h-6 v6 h-2z M773 720 h8 v8 h-8 v-2 h6 v-4 h-6z" />
    <rect x="804" y="714" width="4" height="4"/><path d="M809 714 h3 v8 h-8 v-3 h5z"/><rect x="810" y="719" width="8" height="9"/>
    <rect x="841" y="714" width="9" height="9"/><rect x="846" y="719" width="9" height="9" fill="#a8a8a8"/>
    <rect x="878" y="714" width="10" height="9" fill="#5a5a5a"/><rect x="882" y="719" width="10" height="9" fill="#6a6a6a"/><rect x="882" y="719" width="6" height="4" fill="#c8c8c8"/>
    <path d="M915 714 h8 v9 h-8z M919 718 h9 v10 h-9z" fill="none" stroke="#c8c8c8" stroke-width="1.2"/>
    <path d="M953 714 h8 v9 h-8z" fill="#5a5a5a"/><path d="M957 718 h9 v10 h-9z" fill="none" stroke="#c8c8c8" stroke-width="1.4"/>
   </g>
  </svg>
  <div class="a" style="left:150px;top:58px;width:75px;height:18px;border:1px solid #3a3a3a;background:#4f4f4f;font-size:10px;color:#8a8a8a;text-align:center;line-height:16px">Expand</div>
  <div class="t" style="left:5px;top:86px;font-size:10px;color:#dcdcdc">Pathfinders:</div>
</div>


<!-- TOOLBAR ICONS -->
<svg class="a" style="left:0;top:0" width="72" height="660" viewBox="0 0 72 660">
  <defs>
    <linearGradient id="tg" x1="0" y1="0" x2="0" y2="1"><stop offset="0" stop-color="#d2d2d2"/><stop offset="1" stop-color="#a8a8a8"/></linearGradient>
    <linearGradient id="rg" x1="0" y1="0" x2="0" y2="1"><stop offset="0" stop-color="#858585"/><stop offset="1" stop-color="#5a5a5a"/></linearGradient>
    <linearGradient id="gg" x1="0" y1="0" x2="1" y2="0"><stop offset="0" stop-color="#3a3a3a"/><stop offset="1" stop-color="#c8c8c8"/></linearGradient>
  </defs>
  <rect x="7" y="95" width="28" height="22" fill="#323232" stroke="#2a2a2a"/>
  <g fill="url(#tg)">
    <!-- small triangles -->
    <path d="M61 116 L64 113 L64 116Z"/><path d="M31 164 L34 161 L34 164Z"/><path d="M61 164 L64 161 L64 164Z"/>
    <path d="M31 189 L34 186 L34 189Z"/><path d="M61 189 L64 186 L64 189Z"/><path d="M61 213 L64 210 L64 213Z"/>
    <path d="M61 237 L64 234 L64 237Z"/><path d="M31 262 L34 259 L34 262Z"/><path d="M61 262 L64 259 L64 262Z"/>
    <path d="M31 286 L34 283 L34 286Z"/><path d="M31 310 L34 307 L34 310Z"/><path d="M61 310 L64 307 L64 310Z"/>
    <path d="M31 360 L34 357 L34 360Z"/><path d="M31 386 L34 383 L34 386Z"/><path d="M61 386 L64 383 L64 386Z"/>
    <path d="M61 412 L64 409 L64 412Z"/><path d="M31 436 L34 433 L34 436Z"/>
  </g>
  <!-- selection (outline arrow) -->
  <path d="M16.5 97.5 L16.5 112 L19.5 109 L22.5 114.5 L24.5 113.5 L21.5 108 L26.5 108Z" fill="#2e2e2e" stroke="#d8d8d8" stroke-width="1.1" stroke-linejoin="round"/>
  <!-- direct selection -->
  <path d="M47 98 L47 111 L50 108 L53 113.5 L55 112.5 L52 107 L56.5 107Z" fill="url(#tg)"/>
  <!-- magic wand -->
  <path d="M18.7 121 L20 125 L24 124 L21.5 127 L24.5 130 L20.5 129.5 L19 133 L17.5 129.5 L13 130 L16 127 L13 124 L17.5 125Z" fill="#d0d0d0"/>
  <line x1="21" y1="129" x2="28.5" y2="137.5" stroke="#bdbdbd" stroke-width="1.8"/>
  <!-- lasso -->
  <ellipse cx="50.5" cy="126.5" rx="7.5" ry="4.5" fill="none" stroke="#c8c8c8" stroke-width="1.2"/>
  <path d="M44 128 Q43 132 46 133 Q47 135 45 137" fill="none" stroke="#c8c8c8" stroke-width="1"/>
  <path d="M51 124 L51 138 L60 131Z" fill="url(#tg)"/>
  <line x1="6" y1="143" x2="66" y2="143" stroke="#3a3a3a" stroke-width="1"/><line x1="6" y1="144" x2="66" y2="144" stroke="#565656" stroke-width="1"/>
  <!-- pen -->
  <path d="M13 164 L15.5 154 L23 148.5 L28 153.5 L22 160.5Z" fill="url(#tg)"/>
  <path d="M24 147.5 L26.5 145.5 L30 149 L28 151.5Z" fill="url(#tg)"/>
  <circle cx="20" cy="156" r="1.2" fill="#333"/><line x1="13.5" y1="163.5" x2="19.5" y2="156.5" stroke="#555" stroke-width=".8"/>
  <!-- type T -->
  <text x="50.5" y="162" font-family="Liberation Serif" font-size="18" fill="#d0d0d0" text-anchor="middle">T</text>
  <!-- line -->
  <line x1="14" y1="187" x2="27" y2="173" stroke="#d0d0d0" stroke-width="1.3"/>
  <!-- rect -->
  <rect x="44.5" y="174.5" width="13" height="11" fill="url(#rg)" stroke="#cfcfcf" stroke-width="1"/>
  <!-- brush -->
  <path d="M29.5 196.5 L21 205 L19.5 203.5 L28 195Z" fill="#c0c0c0"/>
  <path d="M20 203 Q17 204 16 207 Q14 209 12.5 209.5 Q17 211 20 208 Q22 206 21 205Z" fill="url(#tg)"/>
  <!-- pencil -->
  <path d="M53 197.5 L57 201.5 L47 211 L43 211.5 L43.5 207.5Z" fill="#8a8a8a" stroke="#c8c8c8" stroke-width="1"/>
  <path d="M53 197.5 L57 201.5 L58 199 L55.5 196.5Z" fill="#d0d0d0"/>
  <!-- shaper/blob -->
  <path d="M13 225 L20 225 Q24 221 27 224 L28 229 L25 233 L25 235 L13 235Z" fill="url(#tg)"/>
  <path d="M17 230 Q20 226 24 226 L29 221 L30 222 L25 228 Q22 231 17 230Z" fill="#333"/>
  <!-- scissors -->
  <circle cx="56.5" cy="223" r="2.8" fill="none" stroke="#c8c8c8" stroke-width="1.2"/>
  <circle cx="56.5" cy="232" r="2.8" fill="none" stroke="#c8c8c8" stroke-width="1.2"/>
  <path d="M43 223 L54 230 M43 232 L54 225" stroke="#c8c8c8" stroke-width="1.4"/>
  <line x1="6" y1="240.5" x2="66" y2="240.5" stroke="#3a3a3a"/><line x1="6" y1="241.5" x2="66" y2="241.5" stroke="#565656"/>
  <!-- rotate -->
  <path d="M15 249.5 A7 7 0 1 1 14 257" fill="none" stroke="#c0c0c0" stroke-width="1.6" stroke-dasharray="2.2 1.6"/>
  <path d="M14 248 L19 246 L18 251Z" fill="#c0c0c0"/>
  <!-- scale -->
  <rect x="46" y="247.5" width="12.5" height="10" fill="#3c3c3c" stroke="#c8c8c8" stroke-width="1"/>
  <rect x="42.5" y="253" width="8.5" height="7.5" fill="none" stroke="#c8c8c8" stroke-width="1"/>
  <path d="M51 254 L56 249 M53 249 L56 249 L56 252" stroke="#d8d8d8" stroke-width="1" fill="none"/>
  <!-- warp -->
  <path d="M14 271 Q17 270 17 275 Q20 281 26 277 Q29 275 30 279 Q28 284 22 283 Q16 283 15 279Z" fill="url(#tg)"/>
  <line x1="13.5" y1="283.5" x2="23.5" y2="273" stroke="#eee" stroke-width="1"/>
  <circle cx="18" cy="279" r="1.8" fill="#333" stroke="#eee" stroke-width="1"/>
  <circle cx="13.5" cy="283.5" r="1.3" fill="#333" stroke="#eee" stroke-width=".8"/><circle cx="23.5" cy="273" r="1.3" fill="#333" stroke="#eee" stroke-width=".8"/>
  <!-- free transform -->
  <rect x="47.5" y="272.5" width="11" height="10.5" fill="none" stroke="#c8c8c8" stroke-width="1.2" stroke-dasharray="1.5 1.5"/>
  <path d="M43 270 L43 282 L51 276Z" fill="url(#tg)"/>
  <!-- shape builder -->
  <circle cx="17" cy="300" r="5" fill="#6a6a6a" stroke="#bbb" stroke-width="1"/>
  <circle cx="22" cy="299" r="6" fill="#5a5a5a" stroke="#aaa" stroke-width="1"/>
  <line x1="13" y1="300" x2="23" y2="300" stroke="#fff" stroke-width="1" stroke-dasharray="1 1"/>
  <path d="M24 301 L24 310.5 L31 306Z" fill="url(#tg)"/>
  <!-- perspective grid -->
  <path d="M43 294 L53 297 L53 303 L58 304 L58 309 L43 309Z" fill="#a0a0a0"/>
  <path d="M46 294 L46 309 M49 295 L49 309 M43 301 L53 302 M43 306 L58 306.5" stroke="#555" stroke-width=".8"/>
  <line x1="6" y1="314.5" x2="66" y2="314.5" stroke="#3a3a3a"/><line x1="6" y1="315.5" x2="66" y2="315.5" stroke="#565656"/>
  <!-- mesh -->
  <rect x="13.5" y="322" width="15" height="11.5" fill="#6a6a6a" stroke="#cfcfcf" stroke-width="1"/>
  <path d="M14 329 Q19 325 21 333 M19 322 Q23 327 28 325 M15 332 Q21 328 28 330" stroke="#e0e0e0" stroke-width=".9" fill="none"/>
  <!-- gradient -->
  <rect x="43.5" y="322" width="15" height="11.5" fill="url(#gg)" stroke="#cfcfcf" stroke-width="1"/>
  <!-- eyedropper -->
  <path d="M14 358.5 L23 349.5 L25 351.5 L16 360.5Z" fill="none" stroke="#cfcfcf" stroke-width="1.1"/>
  <path d="M21 349 L27.5 343.5 Q30 344 29.5 346 L24 352Z" fill="#cfcfcf"/>
  <!-- blend -->
  <rect x="42.5" y="344" width="7" height="8" fill="#aaa"/>
  <rect x="46" y="346.5" width="7" height="8" fill="#777" stroke="#bbb" stroke-width=".8"/>
  <circle cx="55" cy="353.5" r="4.5" fill="#5a5a5a" stroke="#c8c8c8" stroke-width="1"/>
  <line x1="6" y1="365" x2="66" y2="365" stroke="#3a3a3a"/><line x1="6" y1="366" x2="66" y2="366" stroke="#565656"/>
  <!-- symbol sprayer -->
  <rect x="19.5" y="374" width="8.5" height="11.5" fill="#555" stroke="#cfcfcf" stroke-width="1"/>
  <rect x="21.5" y="370.5" width="4" height="3" fill="#cfcfcf"/>
  <circle cx="23.7" cy="380" r="2.3" fill="none" stroke="#d8d8d8" stroke-width="1.2"/>
  <path d="M12 370 h1 M14 370 h1 M16 370 h1 M13 372 h1 M15 372 h1 M12 374 h1 M14 374 h1" stroke="#d0d0d0" stroke-width="1.2"/>
  <!-- graph -->
  <path d="M43.5 370.5 L43.5 384.5 L59 384.5" fill="none" stroke="#cfcfcf" stroke-width="1"/>
  <rect x="46" y="378" width="2.5" height="6" fill="#aaa"/><rect x="50" y="373" width="2.5" height="11" fill="#888" stroke="#ccc" stroke-width=".6"/><rect x="54" y="375" width="2.5" height="9" fill="#aaa"/>
  <line x1="6" y1="390.5" x2="66" y2="390.5" stroke="#3a3a3a"/><line x1="6" y1="391.5" x2="66" y2="391.5" stroke="#565656"/>
  <!-- artboard -->
  <rect x="14.5" y="399" width="12" height="10.5" fill="url(#rg)" stroke="#cfcfcf" stroke-width="1"/>
  <path d="M11 399 h2 M28 399 h3 M11 409.5 h2 M28 409.5 h3 M14.5 395.5 v2 M26.5 395.5 v2 M14.5 411 v2.5 M26.5 411 v2.5" stroke="#cfcfcf" stroke-width="1"/>
  <!-- slice -->
  <path d="M43 411 L53 402 L56 405Z" fill="#cfcfcf"/>
  <path d="M53 401 L58 397.5 L61 398 L56 405Z" fill="#999"/>
  <!-- hand -->
  <path d="M15 427 L15 422 Q16 420.5 17 422 L17 427 L17 420 Q18 418.5 19.5 420 L19.5 427 L19.5 420.5 Q21 419 22 420.5 L22 427 L22 422 Q23 420.5 24.5 422 L24.5 430 L27 427 Q29 427 28 429 L24 436 L16 436 Q13 432 13 429Z" fill="url(#tg)"/>
  <!-- zoom -->
  <circle cx="50" cy="426" r="5.5" fill="#6a6a6a" stroke="#cfcfcf" stroke-width="1.3"/>
  <line x1="54" y1="430" x2="59" y2="435" stroke="#cfcfcf" stroke-width="2.5" stroke-linecap="round"/>
  <line x1="6" y1="440.5" x2="66" y2="440.5" stroke="#3a3a3a"/><line x1="6" y1="441.5" x2="66" y2="441.5" stroke="#565656"/>
  <!-- fill/stroke -->
  <path d="M51 447 L55 445 L55 447 L59 447 L59 452 M59 452 L57 450 M59 452 L61 450" stroke="#7a7a7a" stroke-width="1" fill="none"/>
  <rect x="24.5" y="462.5" width="35" height="35" fill="#fff" stroke="#222" stroke-width="1"/>
  <rect x="33" y="471" width="18" height="18" fill="#4b4b4b" stroke="#222"/>
  <line x1="25" y1="497" x2="59" y2="463" stroke="#e81e1e" stroke-width="2"/>
  <rect x="6.5" y="444.5" width="35" height="35" fill="#4b4b4b" stroke="#2a2a2a" stroke-width="1"/>
  <text x="24" y="468" font-family="Liberation Sans" font-size="16" fill="#e8e8e8" text-anchor="middle">?</text>
  <rect x="6.5" y="487.5" width="7" height="7" fill="#222" stroke="#e8e8e8" stroke-width="1"/>
  <rect x="9.5" y="490.5" width="7" height="7" fill="#222" stroke="#e8e8e8" stroke-width="1"/>
  <!-- color/gradient/none -->
  <rect x="7.5" y="505.5" width="60" height="17" fill="#3e3e3e" stroke="#2a2a2a"/>
  <rect x="10.5" y="507.5" width="14" height="13" fill="#000" stroke="#555"/>
  <rect x="30.5" y="507.5" width="14" height="13" fill="#3a78b8" stroke="#555"/>
  <rect x="32" y="509" width="11" height="10" fill="none" stroke="#9cc4ec" stroke-width=".8"/>
  <rect x="50.5" y="507.5" width="14" height="13" fill="#fff" stroke="#555"/>
  <line x1="51" y1="520" x2="64" y2="508" stroke="#e81e1e" stroke-width="1.6"/>
  <line x1="28" y1="506" x2="28" y2="522" stroke="#2a2a2a"/><line x1="48" y1="506" x2="48" y2="522" stroke="#2a2a2a"/>
  <!-- draw modes -->
  <rect x="7.5" y="530.5" width="20" height="16" fill="#303030"/>
  <rect x="27.5" y="530.5" width="19" height="16" fill="#5a5a5a"/>
  <rect x="46.5" y="530.5" width="20" height="16" fill="#555"/>
  <circle cx="15.5" cy="537.5" r="4" fill="#888" stroke="#ccc" stroke-width=".8"/><rect x="16" y="538" width="6" height="6" fill="#bbb"/>
  <circle cx="35.5" cy="537.5" r="4.5" fill="#888" stroke="#ddd" stroke-width="1"/><rect x="37" y="539" width="6" height="5" fill="none" stroke="#ccc" stroke-width=".8"/>
  <circle cx="56" cy="538.5" r="4" fill="none" stroke="#7a7a7a" stroke-width="1"/>
  <!-- screen mode -->
  <rect x="24.5" y="560.5" width="12" height="9" fill="#555" stroke="#cfcfcf"/>
  <rect x="30.5" y="556.5" width="14" height="10" fill="#666" stroke="#cfcfcf"/>
</svg>
<!-- BOTTOM LEFT: type tools panel, shapes panel, status -->
<div class="a" style="left:35px;top:657px;width:277px;height:56px;background:#4b4b4b;border:1px solid #2a2a2a">
  <div class="a" style="left:0;top:0;width:275px;height:13px;background:#2e2e2e"></div>
  <div class="a" style="left:47px;top:18px;width:20px;height:4px;background:repeating-linear-gradient(90deg,#1e1e1e 0 1px,transparent 1px 2px)"></div>
  <svg class="a" style="left:0;top:0" width="277" height="56" viewBox="0 0 277 56">
    <rect x="6" y="34" width="14" height="13" rx="3" fill="#6a6a6a" stroke="#cfcfcf" stroke-width="1"/>
    <ellipse cx="43" cy="41" rx="9" ry="6.5" fill="#6a6a6a" stroke="#cfcfcf" stroke-width="1"/>
    <polygon points="67,41 71,34 79,34 83,41 79,48 71,48" fill="#6a6a6a" stroke="#cfcfcf" stroke-width="1"/>
    <polygon points="102,33 104.5,38.5 110,39 106,43 107.5,49 102,46 96.5,49 98,43 94,39 99.5,38.5" fill="#6a6a6a" stroke="#cfcfcf" stroke-width="1"/>
    <circle cx="133" cy="40" r="7" fill="none" stroke="#cfcfcf" stroke-width="1.2"/>
    <circle cx="134" cy="39" r="4" fill="#bdbdbd"/>
    <circle cx="140" cy="33" r="1.8" fill="#bdbdbd"/>
    <circle cx="126" cy="47" r="2.2" fill="#bdbdbd"/>
    <line x1="151" y1="13" x2="151" y2="56" stroke="#333" stroke-width="2"/>
    <g fill="#c8c8c8">
      <path d="M161 50 L163 42 L170 36 L175 40 L169 47 Z"/><path d="M170 35 L173 32 L178 37 L175 40Z"/>
      <path d="M191 50 L193 42 L200 36 L205 40 L199 47 Z"/><path d="M200 35 L203 32 L208 37 L205 40Z"/>
      <rect x="185" y="33" width="7" height="1.5"/><rect x="187.8" y="30" width="1.5" height="7"/>
      <path d="M221 50 L223 42 L230 36 L235 40 L229 47 Z"/><path d="M230 35 L233 32 L238 37 L235 40Z"/>
      <rect x="215" y="33" width="7" height="1.5"/>
    </g>
    <path d="M253 48 L253 35 L261 45" fill="none" stroke="#c8c8c8" stroke-width="1.2"/>
  </svg>
</div>
<div class="a" style="left:35px;top:713px;width:313px;height:15px;background:#3a3a3a;border-top:1px solid #2a2a2a">
  <div class="a" style="left:-1px;top:-1px;width:37px;height:16px;background:#4b4b4b"></div><div class="a" style="left:36px;top:-1px;width:2px;height:16px;background:#2a2a2a"></div>
  <div class="a" style="left:44px;top:0;width:41px;height:14px;background:#a9a9a9"><div class="t" style="left:3px;top:2px;font-size:10px;color:#111">25%</div></div>
  <div class="a" style="left:85px;top:0;width:15px;height:14px;background:#474747"></div>
  <div class="a" style="left:88px;top:4px;border-left:4px solid transparent;border-right:4px solid transparent;border-top:6px solid #e8e8e8"></div>
  <div class="a" style="left:110px;top:3px;width:2px;height:8px;background:#5e5e5e"></div>
  <div class="a" style="left:112px;top:3px;border-top:4px solid transparent;border-bottom:4px solid transparent;border-right:6px solid #5e5e5e"></div>
  <div class="a" style="left:126px;top:3px;border-top:4px solid transparent;border-bottom:4px solid transparent;border-right:6px solid #5e5e5e"></div>
  <div class="a" style="left:144px;top:0;width:41px;height:14px;background:#a9a9a9"><div class="t" style="left:3px;top:2px;font-size:10px;color:#111">1</div></div>
  <div class="a" style="left:185px;top:0;width:15px;height:14px;background:#474747"></div>
  <div class="a" style="left:188px;top:4px;border-left:4px solid transparent;border-right:4px solid transparent;border-top:6px solid #e8e8e8"></div>
  <div class="a" style="left:213px;top:3px;border-top:4px solid transparent;border-bottom:4px solid transparent;border-left:6px solid #5e5e5e"></div>
  <div class="a" style="left:229px;top:3px;border-top:4px solid transparent;border-bottom:4px solid transparent;border-left:6px solid #5e5e5e"></div>
  <div class="a" style="left:235px;top:3px;width:2px;height:8px;background:#5e5e5e"></div>
  <div class="a" style="left:243px;top:0;width:1px;height:15px;background:#2a2a2a"></div>
</div>
<div class="a" style="left:1px;top:600px;width:35px;height:128px;background:#4b4b4b;border:1px solid #2a2a2a;border-radius:3px 3px 0 0">
  <div class="a" style="left:0;top:0;width:33px;height:13px;background:#2e2e2e;border-radius:3px 3px 0 0"></div>
  <div class="a" style="left:6px;top:3px;border-top:3px solid transparent;border-bottom:3px solid transparent;border-left:4px solid #d8d8d8"></div>
  <div class="a" style="left:10px;top:3px;border-top:3px solid transparent;border-bottom:3px solid transparent;border-left:4px solid #d8d8d8"></div>
  <div class="xx" style="left:21px;top:3px"></div>
  <div class="a" style="left:7px;top:17px;width:20px;height:4px;background:repeating-linear-gradient(90deg,#1e1e1e 0 1px,transparent 1px 2px)"></div>
  <div class="t" style="left:9px;top:32px;font-family:'Liberation Serif',serif;font-size:19px;color:#d0d0d0">T</div>
  <div class="a" style="left:9px;top:57px;width:18px;height:15px;background:#bdbdbd;border-radius:2px"></div>
  <div class="t" style="left:11px;top:57px;font-family:'Liberation Serif',serif;font-size:16px;font-weight:bold;color:#444">T</div>
  <svg class="a" style="left:0;top:0" width="35" height="128"><path d="M8 86 L16 94 L26 84 M20 80 L27 87 M23 83 L19 88" stroke="#d0d0d0" stroke-width="1.5" fill="none"/></svg>
  <div class="t" style="left:14px;top:103px;font-family:'Liberation Serif',serif;font-size:19px;color:#d0d0d0">T</div>
  <div class="t" style="left:6px;top:104px;font-size:14px;color:#d0d0d0">↓</div>
</div>

<!-- TRANSPARENCY PANEL -->
<div class="a" style="left:348px;top:640px;width:232px;height:88px;background:#4a4a4a;border:1px solid #2a2a2a;border-radius:3px 3px 0 0">
  <div class="ph" style="left:0;top:0;width:230px;border-top:none"></div>
  <div class="dbl" style="left:202px;top:3px"></div>
  <div class="xx" style="left:219px;top:3px"></div>
  <div class="tabrow" style="left:0;top:13px;width:230px"></div>
  <div class="a" style="left:0;top:13px;width:83px;height:18px;background:#4a4a4a;border-right:1px solid #2a2a2a"></div>
  <div class="t" style="left:14px;top:17px;font-size:10px;font-weight:bold;color:#e6e6e6">Transparency</div>
  <div class="pmenu" style="left:211px;top:18px"></div>
  <div class="a" style="left:6px;top:37px;width:94px;height:18px;background:#4a4a4a;border:1px solid #2d2d2d">
    <div class="t" style="left:14px;top:3px;font-size:10px;color:#6a6a6a">Normal</div>
    <div class="a" style="left:76px;top:2px;width:1px;height:12px;background:#333;border-right:1px solid #5a5a5a"></div>
    <div class="a" style="left:81px;top:5px;border-left:4px solid transparent;border-right:4px solid transparent;border-top:6px solid #e0e0e0"></div>
  </div>
  <div class="t" style="left:122px;top:41px;font-size:10px;color:#dcdcdc">Opacity:</div>
  <div class="a" style="left:163px;top:37px;width:46px;height:18px;background:#a9a9a9;border:1px solid #2d2d2d"><div class="t" style="left:3px;top:3px;font-size:10px;color:#111">100%</div></div>
  <div class="dd" style="left:208px;top:37px;height:18px"></div>
  <div class="a" style="left:5px;top:62px;width:220px;height:1px;background:#3c3c3c;border-bottom:1px solid #5e5e5e"></div>
  <div class="a" style="left:6px;top:70px;width:132px;height:20px;background:#4a4a4a;border:1px solid #2d2d2d"></div>
  <div class="a" style="left:8px;top:73px;width:50px;height:18px;background:#fff"></div>
  <div class="a" style="left:13px;top:82px;width:17px;height:8px;background:linear-gradient(90deg,#3a5aa0,#6a5ac0);border-radius:8px 8px 0 0"></div><div class="a" style="left:33px;top:82px;width:18px;height:8px;background:linear-gradient(90deg,#4a4ab0,#6a8ad0);border-radius:8px 8px 0 0"></div>
  <div class="a" style="left:144px;top:69px;width:80px;height:20px;background:#5a5a5a;border:1px solid #2d2d2d;font-size:10px;color:#dcdcdc;text-align:center;line-height:16px">Make Mask</div>
</div>

<!-- TASKBAR -->
<div class="a" style="left:0;top:728px;width:1024px;height:40px;background:linear-gradient(180deg,rgba(40,60,38,.75) 0,rgba(40,60,38,.5) 9px,rgba(0,0,0,0) 13px) 752px 0/260px 40px no-repeat,linear-gradient(90deg,#1f3a1c 0,#132410 30px,#050a05 70px,#040804 300px,#0f1e0d 370px,#2c4a28 410px,#2f5029 450px,#1e3a1b 520px,#0c170b 555px,#1e3a1c 562px,#0a140a 585px,#060b06 640px,#141e12 680px,#101a0e 740px,#060a05 800px,#050805 1024px);border-top:1px solid #6b756a">
<svg class="a" style="left:0;top:0" width="1024" height="40" viewBox="0 728 1024 40">
  <defs>
    <radialGradient id="orb" cx="50%" cy="35%" r="65%"><stop offset="0" stop-color="#9fd4f5"/><stop offset=".45" stop-color="#2f7fc4"/><stop offset=".8" stop-color="#0c4f8f"/><stop offset="1" stop-color="#35c3f0"/></radialGradient>
    <radialGradient id="ie" cx="40%" cy="35%" r="60%"><stop offset="0" stop-color="#bfe8ff"/><stop offset=".5" stop-color="#2a9ae0"/><stop offset="1" stop-color="#0c4fa0"/></radialGradient>
    <linearGradient id="btn" x1="0" y1="0" x2="0" y2="1"><stop offset="0" stop-color="#b4bcb2"/><stop offset=".5" stop-color="#8e988c"/><stop offset="1" stop-color="#6a7868"/></linearGradient>
    <linearGradient id="btn2" x1="0" y1="0" x2="0" y2="1"><stop offset="0" stop-color="#62725f"/><stop offset="1" stop-color="#2e3f2c"/></linearGradient>
  </defs>
  <!-- start orb -->
  <circle cx="27" cy="748" r="18.5" fill="url(#orb)" stroke="#0a2a50" stroke-width="1"/>
  <ellipse cx="27" cy="740" rx="14" ry="8" fill="#ffffff" opacity=".25"/>
  <path d="M17 739 Q21.5 735.5 27 738.5 L25.5 746.5 Q20.5 743.5 15.5 746.5Z" fill="#f0622a"/>
  <path d="M28 739 Q32.5 741.5 38.5 737.5 L37 745.5 Q31.5 749 26.5 746.5Z" fill="#8cc43c"/>
  <path d="M15.5 748 Q20.5 745 25.5 748 L24 756 Q19 753 14 756Z" fill="#3aa0e8"/>
  <path d="M26.5 748 Q31.5 750.5 37 747 L35.5 755 Q30 758.5 25 756Z" fill="#fcc21e"/>
  <!-- IE -->
  <text x="90" y="760" font-family="Liberation Sans" font-weight="bold" font-size="42" fill="url(#ie)" text-anchor="middle">e</text>
  <path d="M75 758 Q70 764 80 760 Q95 752 103 738 Q106 731 99 735" fill="none" stroke="#f2b51a" stroke-width="2.4"/>
  <!-- folder -->
  <path d="M135 738 L147 738 L149 740 L166 740 L167 762 L135 762Z" fill="#f6dd8e" stroke="#c9a94a" stroke-width=".8"/>
  <rect x="138" y="735" width="8" height="3" fill="#fff"/><rect x="139" y="736" width="3" height="2" fill="#1ea01e"/>
  <rect x="146" y="737" width="8" height="3" fill="#fff"/><rect x="147" y="738" width="3" height="2" fill="#d02020"/>
  <rect x="154" y="739" width="8" height="3" fill="#fff"/><rect x="155" y="740" width="3" height="2" fill="#2080e0"/>
  <path d="M136 744 L166 744 L167 762 L135 762Z" fill="#f3d88a"/>
  <path d="M140 751 L160 751 L160 763 L155 763 L155 757 L145 757 L145 763 L140 763Z" fill="#7ec6ea" stroke="#3a8ac0" stroke-width=".8"/>
  <!-- WMP -->
  <rect x="202" y="737" width="23" height="24" fill="#a9d0ea" stroke="#5a8ab0" stroke-width=".8"/>
  <rect x="199" y="737" width="22" height="24" fill="#7fb3d9" stroke="#5a8ab0" stroke-width=".8"/>
  <circle cx="210" cy="749" r="8" fill="#f07818"/>
  <path d="M207 744 L215 749 L207 754Z" fill="#fff"/>
  <!-- chrome -->
  <circle cx="275" cy="748" r="14.5" fill="#db4437"/>
  <path d="M275 748 L262.4 755.2 A14.5 14.5 0 0 0 282 760.7Z" fill="#0f9d58"/>
  <path d="M262.4 755.2 A14.5 14.5 0 0 1 262 741 L275 748Z" fill="#0f9d58"/>
  <path d="M275 748 L282 760.7 A14.5 14.5 0 0 0 289.5 748 L289.5 742 L275 742Z" fill="#f4b400"/>
  <circle cx="275" cy="748" r="6.5" fill="#fff"/>
  <circle cx="275" cy="748" r="5" fill="#4285f4"/>
  <!-- Ai button -->
  <rect x="308" y="729.5" width="58" height="37" rx="3" fill="url(#btn)" stroke="#b8c4b6" stroke-width="1"/>
  <rect x="323" y="733" width="28" height="26" fill="#2b1703" stroke="#f7a21b" stroke-width="1.6"/>
  <text x="337" y="752" font-family="Liberation Sans" font-weight="bold" font-size="15" fill="#f7a21b" text-anchor="middle">Ai</text>
  <!-- Ps -->
  <rect x="385" y="733" width="28" height="26" fill="#0c1a4a" stroke="#64b5f0" stroke-width="1.6"/>
  <text x="399" y="752" font-family="Liberation Sans" font-weight="bold" font-size="15" fill="#7cc4f4" text-anchor="middle">Ps</text>
  <!-- Paint button -->
  <rect x="432" y="729.5" width="58" height="37" rx="3" fill="url(#btn2)" stroke="#8a9a88" stroke-width="1"/>
  <ellipse cx="458" cy="750" rx="14" ry="9" fill="#d6e8f4" stroke="#8aaac4" stroke-width=".8"/>
  <circle cx="451" cy="751" r="2.2" fill="#e04030"/><circle cx="455" cy="745" r="2.2" fill="#40b040"/><circle cx="461" cy="744" r="2.2" fill="#f0c020"/><circle cx="466" cy="747" r="2.2" fill="#3080e0"/>
  <line x1="463" y1="759" x2="474" y2="736" stroke="#e88a20" stroke-width="3"/>
  <path d="M472 738 L476 731 L479 735Z" fill="#e0c090"/>
  <!-- AVG button -->
  <rect x="494" y="729.5" width="58" height="37" rx="3" fill="url(#btn2)" stroke="#8a9a88" stroke-width="1"/>
  <path d="M508 735 L522 734 L522 748 L508 749Z" fill="#f39a1c"/>
  <path d="M522 734 L538 736 L537 750 L522 748Z" fill="#1e88d0"/>
  <path d="M508 749 L522 748 L522 762 L508 760Z" fill="#3cb04a"/>
  <path d="M522 748 L537 750 L536 763 L522 762Z" fill="#e63a2a"/>
  <!-- tray -->
  <path d="M846 754 L850 749 L854 754Z" fill="#e8e8e8"/>
  <path d="M868.5 740 L868.5 760" stroke="#f0f0f0" stroke-width="1.5"/><path d="M869 741 Q873 739 876 742 Q879 744 881 742 L881 751 Q878 753 876 751 Q873 748 869 750Z" fill="#f0f0f0"/>
  <circle cx="880" cy="755" r="5" fill="#d82020" stroke="#fff" stroke-width=".8"/>
  <path d="M878 753 L882 757 M882 753 L878 757" stroke="#fff" stroke-width="1.2"/>
  <rect x="892" y="744" width="13" height="9" fill="none" stroke="#e8e8e8" stroke-width="1.5"/>
  <line x1="898" y1="753" x2="898" y2="758" stroke="#e8e8e8" stroke-width="1.5"/><line x1="893" y1="758" x2="904" y2="758" stroke="#e8e8e8" stroke-width="1.5"/>
  <rect x="890" y="740" width="4" height="6" fill="#e8e8e8"/>
  <path d="M918 745 L921 745 L925 741 L925 756 L921 752 L918 752Z" fill="#e8e8e8"/>
  <path d="M928 745 Q930 748.5 928 752 M931 743 Q934 748.5 931 754" stroke="#e8e8e8" stroke-width="1.2" fill="none"/>
  <text x="949" y="744" font-family="Liberation Sans" font-size="12" fill="#f4f4f4">10:56 AM</text>
  <text x="948" y="761" font-family="Liberation Sans" font-size="12" fill="#f4f4f4" textLength="50">5/30/2016</text>
  <rect x="1010" y="730" width="14" height="38" fill="#1a221a" stroke="#6a746a" stroke-width="1"/>
</svg>
</div>

<!-- MENU -->
<div id="menu" class="a" style="left:111px;top:25px;width:280px;height:661px;background:#f0f0f0;border:1px solid #a8a8a8;box-shadow:2px 2px 2px rgba(0,0,0,.35)">
<div class="sepv"></div>
<div class="hl"></div>
<div class="it" style="top:6px">Transform</div>
<div class="ar" style="top:9px"></div>
<div class="it" style="top:28px">Arrange</div>
<div class="ar" style="top:31px"></div>
<div class="hs" style="top:51px"></div>
<div class="it" style="top:58px">Group</div>
<div class="sc" style="top:58px">Ctrl+G</div>
<div class="it" style="top:80px">Ungroup</div>
<div class="sc" style="top:80px">Shift+Ctrl+G</div>
<div class="it" style="top:102px">Lock</div>
<div class="ar" style="top:105px"></div>
<div class="it dis" style="top:124px">Unlock All</div>
<div class="sc dis" style="top:124px">Alt+Ctrl+2</div>
<div class="it" style="top:146px">Hide</div>
<div class="ar" style="top:149px"></div>
<div class="it dis" style="top:168px">Show All</div>
<div class="sc dis" style="top:168px">Alt+Ctrl+3</div>
<div class="hs" style="top:191px"></div>
<div class="it" style="top:198px">Expand...</div>
<div class="it dis" style="top:220px">Expand Appearance</div>
<div class="it" style="top:242px">Rasterize...</div>
<div class="it dis" style="top:264px">Create Gradient Mesh...</div>
<div class="it dis" style="top:286px">Create Object Mosaic...</div>
<div class="it" style="top:308px">Flatten Transparency...</div>
<div class="hs" style="top:331px"></div>
<div class="it" style="top:338px">Slice</div>
<div class="ar" style="top:341px"></div>
<div class="it" style="top:360px">Create Trim Marks</div>
<div class="hs" style="top:383px"></div>
<div class="it" style="top:390px">Path</div>
<div class="ar" style="top:393px"></div>
<div class="it" style="top:412px">Pattern</div>
<div class="ar" style="top:415px"></div>
<div class="it" style="top:434px">Blend</div>
<div class="ar" style="top:437px"></div>
<div class="it" style="top:456px">Envelope Distort</div>
<div class="ar" style="top:459px"></div>
<div class="it" style="top:478px">Perspective</div>
<div class="ar" style="top:481px"></div>
<div class="it" style="top:500px">Live Paint</div>
<div class="ar" style="top:503px"></div>
<div class="it" style="top:522px">Image Trace</div>
<div class="ar" style="top:525px"></div>
<div class="it" style="top:544px">Text Wrap</div>
<div class="ar" style="top:547px"></div>
<div class="hs" style="top:567px"></div>
<div class="it" style="top:574px">Clipping Mask</div>
<div class="ar" style="top:577px"></div>
<div class="it" style="top:596px">Compound Path</div>
<div class="ar" style="top:599px"></div>
<div class="it" style="top:618px">Artboards</div>
<div class="ar" style="top:621px"></div>
<div class="it" style="top:640px">Graph</div>
<div class="ar" style="top:643px"></div>
</div>

</body></html>
